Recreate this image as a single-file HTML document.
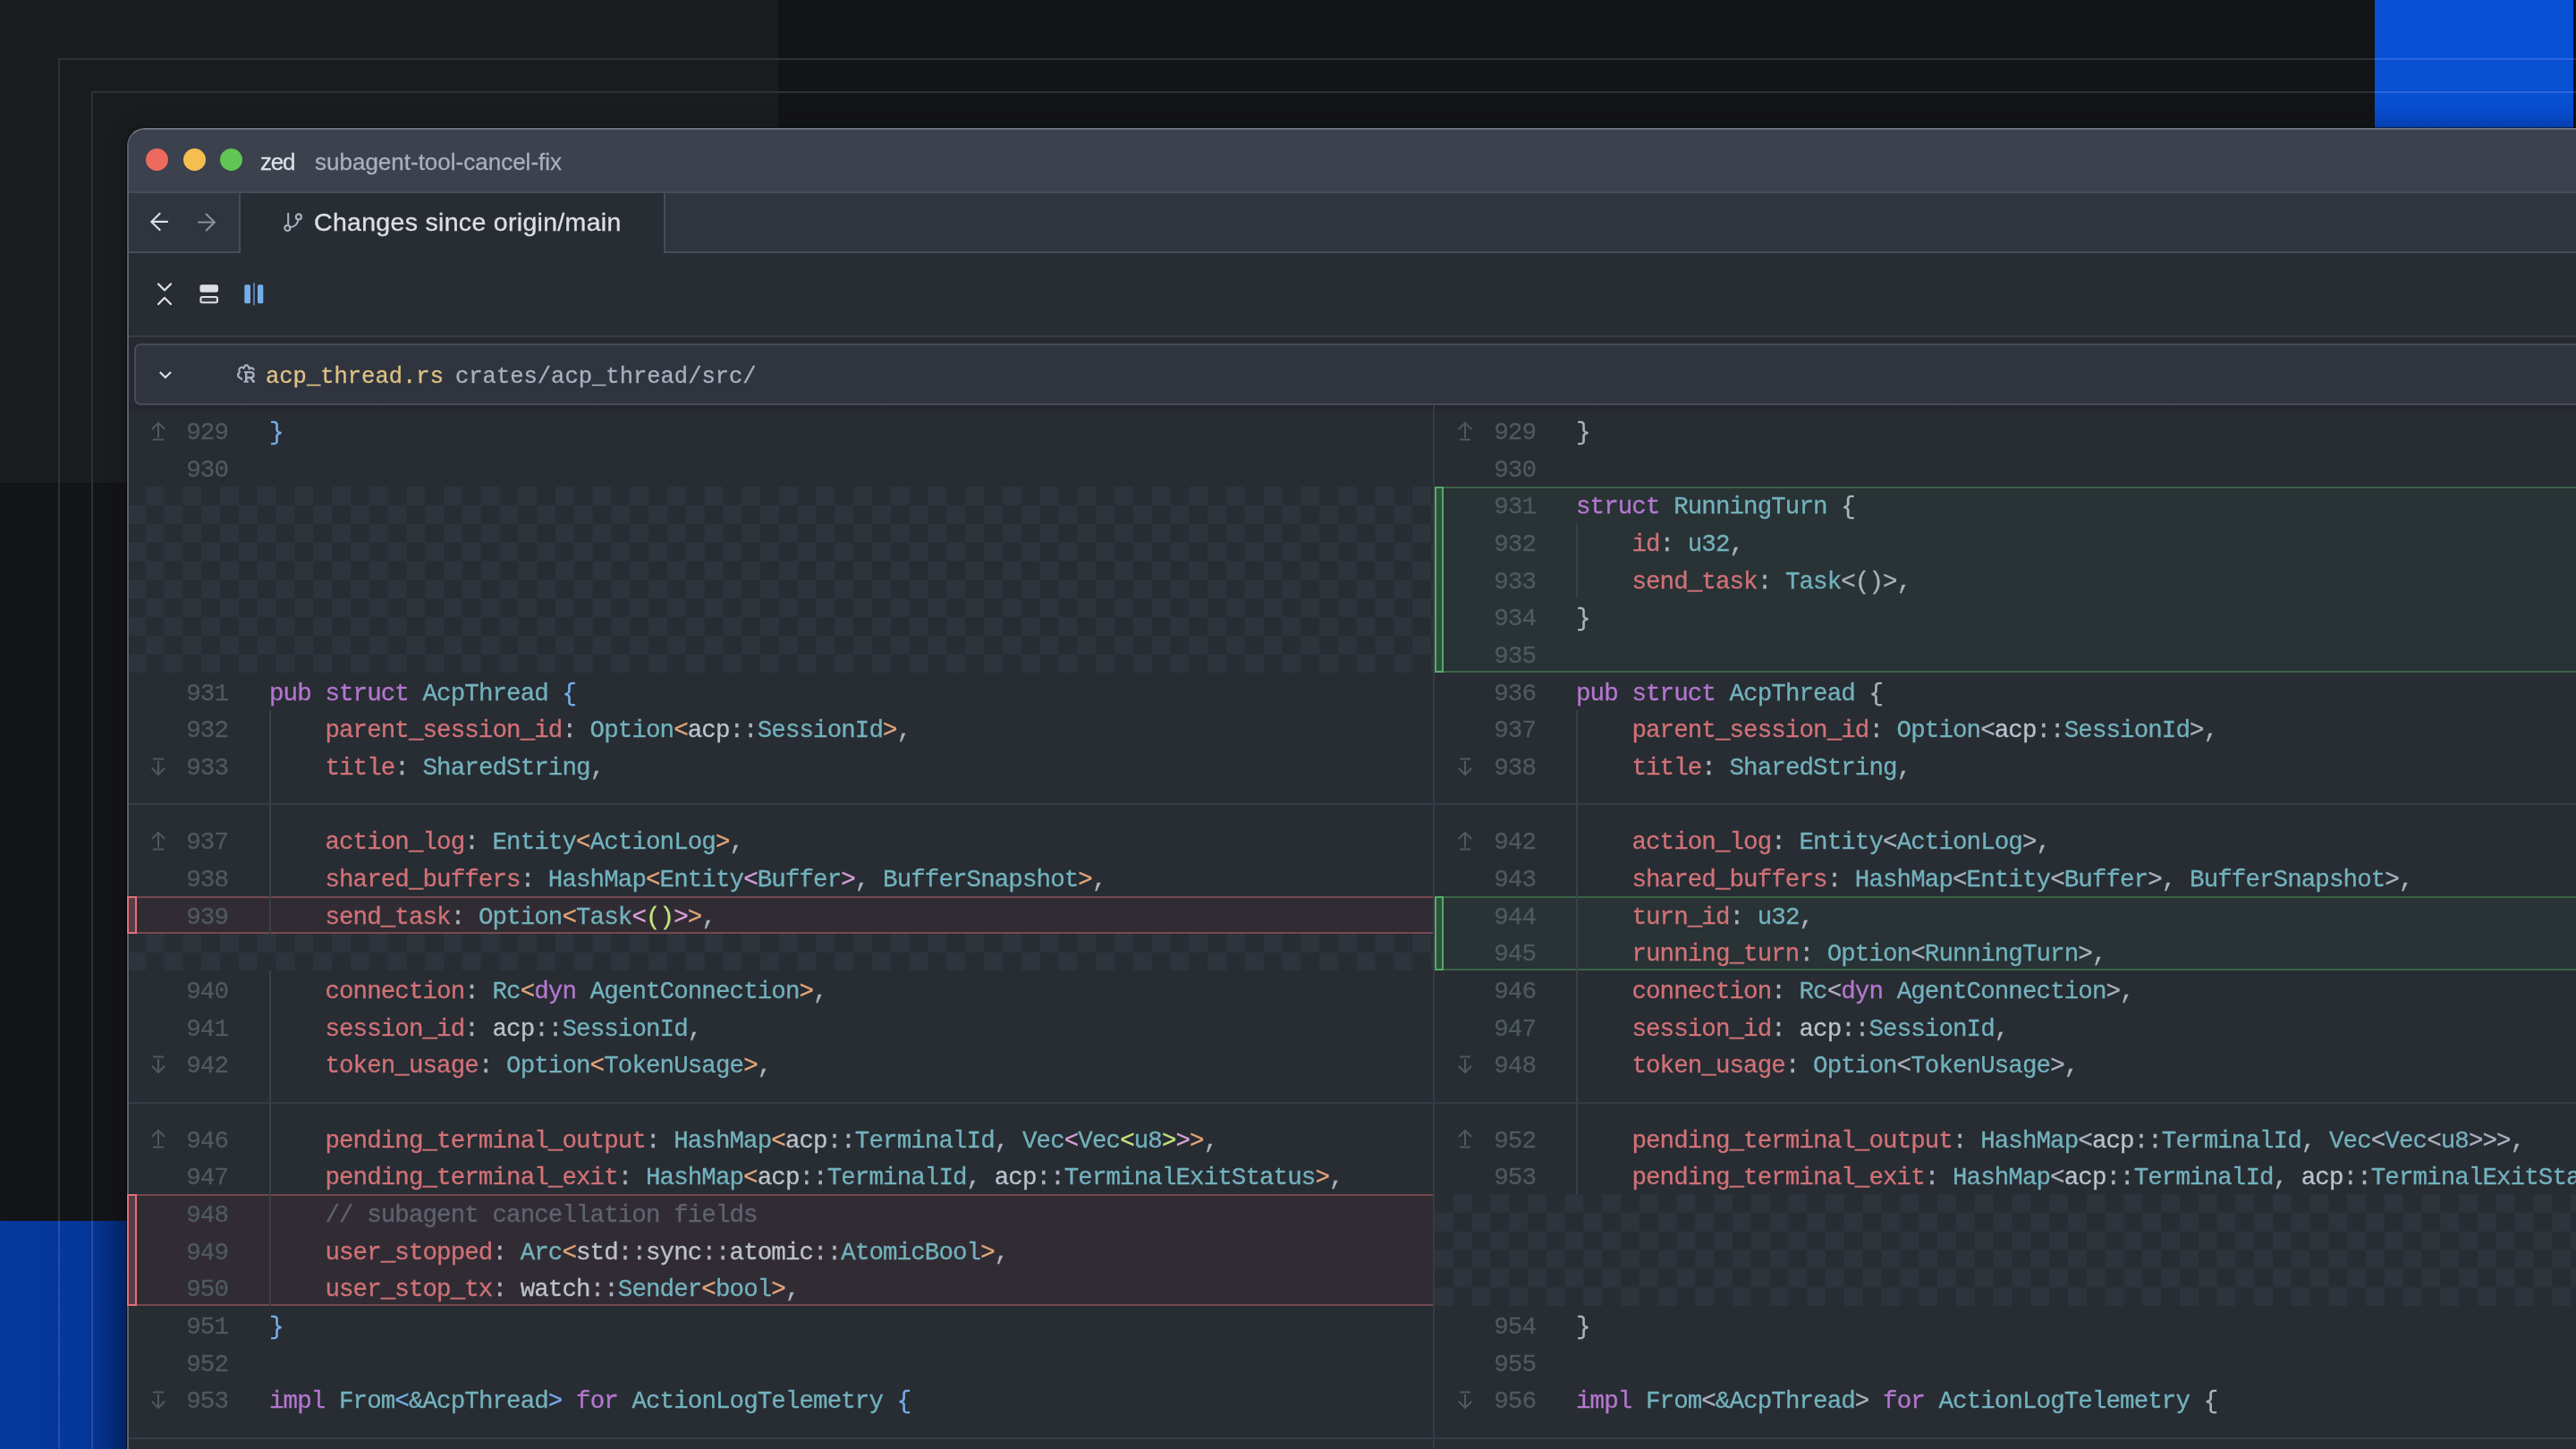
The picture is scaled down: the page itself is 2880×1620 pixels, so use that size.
<!DOCTYPE html>
<html><head><meta charset="utf-8"><style>
*{margin:0;padding:0;box-sizing:border-box}
html,body{width:2880px;height:1620px;overflow:hidden;background:#131418}
.ln,.code,.sans,.mono{will-change:transform}
.code,.ln{-webkit-text-stroke:0.3px currentColor}
.sans,.mono{-webkit-text-stroke:0.3px currentColor}
body{position:relative}
.a{position:absolute}
.ln{position:absolute;width:100px;text-align:right;font-family:"Liberation Mono",monospace;font-size:27.5px;letter-spacing:-0.912px;line-height:41.67px;color:#4e5a5f;white-space:pre}
.code{position:absolute;font-family:"Liberation Mono",monospace;font-size:27.5px;line-height:41.67px;white-space:pre;letter-spacing:-0.912px}
.ic{position:absolute}
.kw{color:#b477cf} .ty{color:#72b2bd} .pr{color:#d07277} .pu{color:#abb2bd} .va{color:#bcc1ca} .cm{color:#5d636f}
.b1{color:#74ade8} .b2{color:#e3a679} .b3{color:#d99fd9} .b4{color:#c3e57a} .pl{color:#bcc1ca}
.sans{font-family:"Liberation Sans",sans-serif;white-space:pre;position:absolute}
.mono{font-family:"Liberation Mono",monospace;white-space:pre;position:absolute}
</style></head>
<body>
<div class="a" style="left:0;top:0;width:870px;height:540px;background:#1b1c20"></div><div class="a" style="left:65px;top:65px;width:2815px;height:1555px;border-left:2px solid #2e3035;border-top:2px solid #2e3035"></div><div class="a" style="left:102px;top:102px;width:2778px;height:1518px;border-left:2px solid #2e3035;border-top:2px solid #2e3035"></div><div class="a" style="left:2655px;top:0;width:222px;height:143px;background:linear-gradient(180deg,#084fd4 0%,#0850d2 75%,#0748c8 100%)"></div><div class="a" style="left:0;top:1365px;width:142px;height:255px;background:linear-gradient(90deg,#06399b 0%,#05379a 65%,#03276e 100%)"></div><div class="a" style="left:2655px;top:65px;width:222px;height:2px;background:#2a64de"></div><div class="a" style="left:2655px;top:102px;width:222px;height:2px;background:#2a64de"></div><div class="a" style="left:65px;top:1365px;width:2px;height:255px;background:#2a4ca8"></div><div class="a" style="left:102px;top:1365px;width:2px;height:255px;background:#2a4ca8"></div><div class="a" style="left:141px;top:142px;width:2758px;height:1497px;border-radius:21px 0 0 0;background:#000;opacity:.6;box-shadow:0 0 22px 2px rgba(0,0,0,.35)"></div><div class="a" style="left:142px;top:143px;width:2758px;height:1497px;border-radius:20px 0 0 0;background:#282c33;border-left:2px solid #5b5f68;border-top:2px solid #6e727c;overflow:hidden"></div><div class="a" style="left:144px;top:145px;width:2736px;height:69px;background:#3b414d;border-top-left-radius:18px"></div><div class="a" style="left:144px;top:214px;width:2736px;height:2px;background:#464b57"></div><div class="a" style="left:162.9px;top:166.3px;width:25.2px;height:25.2px;border-radius:50%;background:#ec6a5e"></div><div class="a" style="left:204.7px;top:166.3px;width:25.2px;height:25.2px;border-radius:50%;background:#f4bf4f"></div><div class="a" style="left:246.2px;top:166.3px;width:25.2px;height:25.2px;border-radius:50%;background:#61c554"></div><div class="sans" id="t_zed" style="left:291px;top:164.5px;font-size:26px;line-height:32px;color:#dce0e5;letter-spacing:-1.2px">zed</div><div class="sans" id="t_branch" style="left:352px;top:164.5px;font-size:26px;line-height:32px;color:#a9afbc">subagent-tool-cancel-fix</div><div class="a" style="left:144px;top:216px;width:2736px;height:66px;background:#2f343e"></div><div class="a" style="left:144px;top:280.5px;width:2736px;height:2px;background:#464b57"></div><div class="a" style="left:267px;top:216px;width:2px;height:66px;background:#464b57"></div><div class="a" style="left:269px;top:216px;width:473px;height:67px;background:#282c33"></div><div class="a" style="left:742px;top:216px;width:2px;height:66px;background:#464b57"></div><svg class="a" style="left:164px;top:236px" width="26" height="24" viewBox="0 0 26 24"><path d="M23 11.9 H6.5 M14.6 2.7 L5.4 11.9 L14.6 21.1" stroke="#dce0e5" stroke-width="2.1" fill="none" stroke-linecap="round"/></svg><svg class="a" style="left:219px;top:236px" width="26" height="24" viewBox="0 0 26 24"><path d="M3 12.5 H19.5 M11.7 3.4 L20.8 12.5 L11.7 21.6" stroke="#8b909a" stroke-width="2.1" fill="none" stroke-linecap="round"/></svg><svg class="a" style="left:315px;top:236px" width="24" height="26" viewBox="0 0 24 26"><circle cx="6.3" cy="19" r="3" stroke="#a9afbc" stroke-width="2.1" fill="none"/><circle cx="18.9" cy="6.4" r="3" stroke="#a9afbc" stroke-width="2.1" fill="none"/><path d="M7.2 2.8 V16.2 M18.4 9.5 C18 14.6 13.8 17.6 8.9 18.3" stroke="#a9afbc" stroke-width="2.1" fill="none" stroke-linecap="round"/></svg><div class="sans" id="t_tab" style="left:351px;top:231px;font-size:28.5px;line-height:34px;color:#dce0e5;letter-spacing:0.31px">Changes since origin/main</div><div class="a" style="left:144px;top:282.5px;width:2736px;height:93px;background:#282c33"></div><div class="a" style="left:144px;top:375px;width:2736px;height:2px;background:#363c46"></div><svg class="a" style="left:172px;top:312px" width="24" height="34" viewBox="0 0 24 34"><path d="M5 5.5 L12 12.5 L19 5.5 M5 28 L12 21 L19 28" stroke="#dce0e5" stroke-width="2.3" fill="none" stroke-linecap="round" stroke-linejoin="round"/></svg><svg class="a" style="left:220px;top:314px" width="28" height="30" viewBox="0 0 28 30"><rect x="3.4" y="4.3" width="20.6" height="8.4" rx="2.2" fill="#dce0e5"/><rect x="4.4" y="17.9" width="18.6" height="6.4" rx="1.8" stroke="#dce0e5" stroke-width="2" fill="#3b3f49"/></svg><svg class="a" style="left:270px;top:312px" width="28" height="34" viewBox="0 0 28 34"><rect x="3.3" y="6.3" width="6.7" height="21" rx="1.6" fill="#74ade8"/><rect x="18" y="6.3" width="6.3" height="21" rx="1.6" fill="#74ade8"/><rect x="13.1" y="4.2" width="1.8" height="25.2" fill="#5b86b5"/></svg><div class="a" style="left:144px;top:377px;width:2736px;height:83px;background:#26292f"></div><div class="a" style="left:150px;top:384px;width:2740px;height:69px;background:#2f343e;border:2px solid #464b57;border-radius:7px"></div><svg class="a" style="left:175px;top:409px" width="20" height="20" viewBox="0 0 20 20"><path d="M3.8 7 L9.9 13 L16 7" stroke="#dce0e5" stroke-width="2.2" fill="none"/></svg><svg class="a" style="left:258px;top:400px" width="36" height="34" viewBox="0 0 36 34"><path d="M25.6 13.1 C24.6 11.3 22.6 10.6 20.7 12.2 C20.1 10.4 19.4 8.2 17.6 8.1 C15.9 8.1 15.1 10.1 14.6 11.5 C13 10.4 11 10.4 9.6 12.3 C8.6 13.8 9.9 15.5 9.9 16.4 C8.4 17.4 7.6 19.4 8.7 21.2 C9.6 22.6 11.4 22.6 12.2 23.9" stroke="#a9afbc" stroke-width="2.2" fill="none" stroke-linecap="round"/><path d="M17.2 16.2 V26.4 M15 16.1 H21.6 C24.3 16.1 25.6 17.3 25.6 19.2 C25.6 21.1 24.3 22.3 21.6 22.3 H17.6 M21.8 22.3 L25.6 26.6 M14.6 26.6 H19.8 M23.8 26.6 H27" stroke="#a9afbc" stroke-width="2.4" fill="none"/></svg><div class="mono" id="t_file" style="left:297px;top:405px;font-size:25.5px;line-height:34px;color:#dec184">acp_thread.rs</div><div class="mono" id="t_path" style="left:509px;top:405px;font-size:25.5px;line-height:34px;color:#a9afbc">crates/acp_thread/src/</div><div class="a" style="left:144px;top:453px;width:2736px;height:1167px;background:#282c33"></div><div class="a" style="left:144px;top:453px;width:2736px;height:10px;background:linear-gradient(#22252b,rgba(40,44,51,0))"></div><div class="a" style="left:144.0px;top:543.5px;width:1458.0px;height:208.4px;background:repeating-conic-gradient(#2f333c 0% 25%, #282c33 0% 50%) -2.00px 0px / 41.67px 41.67px"></div><div class="a" style="left:144.0px;top:1043.6px;width:1458.0px;height:41.7px;background:repeating-conic-gradient(#2f333c 0% 25%, #282c33 0% 50%) -2.00px 0px / 41.67px 41.67px"></div><div class="a" style="left:1604.0px;top:1335.3px;width:1276.0px;height:125.0px;background:repeating-conic-gradient(#2f333c 0% 25%, #282c33 0% 50%) -0.30px 0px / 41.67px 41.67px"></div><div class="a" style="left:144px;top:1001.9px;width:1458px;height:41.7px;background:#312c34;border-top:2px solid #754850;border-bottom:2px solid #754850"></div><div class="a" style="left:142px;top:1001.9px;width:11px;height:41.7px;background:#573e46;border:2px solid #e07078"></div><div class="a" style="left:144px;top:1335.3px;width:1458px;height:125.0px;background:#312c34;border-top:2px solid #754850;border-bottom:2px solid #754850"></div><div class="a" style="left:142px;top:1335.3px;width:11px;height:125.0px;background:#573e46;border:2px solid #e07078"></div><div class="a" style="left:1604px;top:543.5px;width:1276px;height:208.4px;background:#293235;border-top:2px solid #3b6347;border-bottom:2px solid #3b6347"></div><div class="a" style="left:1604px;top:543.5px;width:10px;height:208.4px;background:#2f4f3f;border:2px solid #55ab63"></div><div class="a" style="left:1604px;top:1001.9px;width:1276px;height:83.3px;background:#293235;border-top:2px solid #3b6347;border-bottom:2px solid #3b6347"></div><div class="a" style="left:1604px;top:1001.9px;width:10px;height:83.3px;background:#2f4f3f;border:2px solid #55ab63"></div><div class="a" style="left:1602px;top:453px;width:2px;height:1167px;background:#363b45"></div><div class="a" style="left:144px;top:898.1px;width:1458px;height:2px;background:#363c46"></div><div class="a" style="left:1604px;top:898.1px;width:1276px;height:2px;background:#363c46"></div><div class="a" style="left:144px;top:1231.5px;width:1458px;height:2px;background:#363c46"></div><div class="a" style="left:1604px;top:1231.5px;width:1276px;height:2px;background:#363c46"></div><div class="a" style="left:144px;top:1606.5px;width:1458px;height:2px;background:#363c46"></div><div class="a" style="left:1604px;top:1606.5px;width:1276px;height:2px;background:#363c46"></div><div class="a" style="left:300.5px;top:793.6px;width:2px;height:250.0px;background:#3b4048"></div><div class="a" style="left:300.5px;top:1085.2px;width:2px;height:375.0px;background:#3b4048"></div><div class="a" style="left:1761.8px;top:585.2px;width:2px;height:83.3px;background:#3b4048"></div><div class="a" style="left:1761.8px;top:793.6px;width:2px;height:541.7px;background:#3b4048"></div><div class="ln" style="left:155.3px;top:463.05px">929</div><svg class="ic" style="left:166.5px;top:469.5px" width="20" height="24" viewBox="0 0 20 24"><path d="M2.8 10 L10 2.8 L17.2 10 M10 3.2 V19.5 M4 21.6 H16" stroke="#4e5a5f" stroke-width="2" fill="none" stroke-linecap="butt" stroke-linejoin="miter"/></svg><div class="code" style="left:300.5px;top:463.05px"><span class="b1">}</span></div><div class="ln" style="left:155.3px;top:504.72px">930</div><div class="ln" style="left:155.3px;top:754.74px">931</div><div class="code" style="left:300.5px;top:754.74px"><span class="kw">pub</span><span class="pu"> </span><span class="kw">struct</span><span class="pu"> </span><span class="ty">AcpThread</span><span class="pu"> </span><span class="b1">{</span></div><div class="ln" style="left:155.3px;top:796.41px">932</div><div class="code" style="left:300.5px;top:796.41px"><span class="pu">    </span><span class="pr">parent_session_id</span><span class="pu">: </span><span class="ty">Option</span><span class="b2">&lt;</span><span class="va">acp</span><span class="pu">::</span><span class="ty">SessionId</span><span class="b2">&gt;</span><span class="pu">,</span></div><div class="ln" style="left:155.3px;top:838.08px">933</div><svg class="ic" style="left:166.5px;top:844.6px" width="20" height="24" viewBox="0 0 20 24"><path d="M2.8 13.8 L10 21 L17.2 13.8 M10 20.6 V5.8 M4 3.6 H16" stroke="#4e5a5f" stroke-width="2" fill="none" stroke-linecap="butt" stroke-linejoin="miter"/></svg><div class="code" style="left:300.5px;top:838.08px"><span class="pu">    </span><span class="pr">title</span><span class="pu">: </span><span class="ty">SharedString</span><span class="pu">,</span></div><div class="ln" style="left:155.3px;top:921.42px">937</div><svg class="ic" style="left:166.5px;top:927.9px" width="20" height="24" viewBox="0 0 20 24"><path d="M2.8 10 L10 2.8 L17.2 10 M10 3.2 V19.5 M4 21.6 H16" stroke="#4e5a5f" stroke-width="2" fill="none" stroke-linecap="butt" stroke-linejoin="miter"/></svg><div class="code" style="left:300.5px;top:921.42px"><span class="pu">    </span><span class="pr">action_log</span><span class="pu">: </span><span class="ty">Entity</span><span class="b2">&lt;</span><span class="ty">ActionLog</span><span class="b2">&gt;</span><span class="pu">,</span></div><div class="ln" style="left:155.3px;top:963.09px">938</div><div class="code" style="left:300.5px;top:963.09px"><span class="pu">    </span><span class="pr">shared_buffers</span><span class="pu">: </span><span class="ty">HashMap</span><span class="b2">&lt;</span><span class="ty">Entity</span><span class="b3">&lt;</span><span class="ty">Buffer</span><span class="b3">&gt;</span><span class="pu">, </span><span class="ty">BufferSnapshot</span><span class="b2">&gt;</span><span class="pu">,</span></div><div class="ln" style="left:155.3px;top:1004.76px">939</div><div class="code" style="left:300.5px;top:1004.76px"><span class="pu">    </span><span class="pr">send_task</span><span class="pu">: </span><span class="ty">Option</span><span class="b2">&lt;</span><span class="ty">Task</span><span class="b3">&lt;</span><span class="b4">(</span><span class="b4">)</span><span class="b3">&gt;</span><span class="b2">&gt;</span><span class="pu">,</span></div><div class="ln" style="left:155.3px;top:1088.10px">940</div><div class="code" style="left:300.5px;top:1088.10px"><span class="pu">    </span><span class="pr">connection</span><span class="pu">: </span><span class="ty">Rc</span><span class="b2">&lt;</span><span class="kw">dyn</span><span class="pu"> </span><span class="ty">AgentConnection</span><span class="b2">&gt;</span><span class="pu">,</span></div><div class="ln" style="left:155.3px;top:1129.77px">941</div><div class="code" style="left:300.5px;top:1129.77px"><span class="pu">    </span><span class="pr">session_id</span><span class="pu">: </span><span class="va">acp</span><span class="pu">::</span><span class="ty">SessionId</span><span class="pu">,</span></div><div class="ln" style="left:155.3px;top:1171.44px">942</div><svg class="ic" style="left:166.5px;top:1177.9px" width="20" height="24" viewBox="0 0 20 24"><path d="M2.8 13.8 L10 21 L17.2 13.8 M10 20.6 V5.8 M4 3.6 H16" stroke="#4e5a5f" stroke-width="2" fill="none" stroke-linecap="butt" stroke-linejoin="miter"/></svg><div class="code" style="left:300.5px;top:1171.44px"><span class="pu">    </span><span class="pr">token_usage</span><span class="pu">: </span><span class="ty">Option</span><span class="b2">&lt;</span><span class="ty">TokenUsage</span><span class="b2">&gt;</span><span class="pu">,</span></div><div class="ln" style="left:155.3px;top:1254.78px">946</div><svg class="ic" style="left:166.5px;top:1261.3px" width="20" height="24" viewBox="0 0 20 24"><path d="M2.8 10 L10 2.8 L17.2 10 M10 3.2 V19.5 M4 21.6 H16" stroke="#4e5a5f" stroke-width="2" fill="none" stroke-linecap="butt" stroke-linejoin="miter"/></svg><div class="code" style="left:300.5px;top:1254.78px"><span class="pu">    </span><span class="pr">pending_terminal_output</span><span class="pu">: </span><span class="ty">HashMap</span><span class="b2">&lt;</span><span class="va">acp</span><span class="pu">::</span><span class="ty">TerminalId</span><span class="pu">, </span><span class="ty">Vec</span><span class="b3">&lt;</span><span class="ty">Vec</span><span class="b4">&lt;</span><span class="ty">u8</span><span class="b4">&gt;</span><span class="b3">&gt;</span><span class="b2">&gt;</span><span class="pu">,</span></div><div class="ln" style="left:155.3px;top:1296.45px">947</div><div class="code" style="left:300.5px;top:1296.45px"><span class="pu">    </span><span class="pr">pending_terminal_exit</span><span class="pu">: </span><span class="ty">HashMap</span><span class="b2">&lt;</span><span class="va">acp</span><span class="pu">::</span><span class="ty">TerminalId</span><span class="pu">, </span><span class="va">acp</span><span class="pu">::</span><span class="ty">TerminalExitStatus</span><span class="b2">&gt;</span><span class="pu">,</span></div><div class="ln" style="left:155.3px;top:1338.12px">948</div><div class="code" style="left:300.5px;top:1338.12px"><span class="pu">    </span><span class="cm">// subagent cancellation fields</span></div><div class="ln" style="left:155.3px;top:1379.79px">949</div><div class="code" style="left:300.5px;top:1379.79px"><span class="pu">    </span><span class="pr">user_stopped</span><span class="pu">: </span><span class="ty">Arc</span><span class="b2">&lt;</span><span class="va">std</span><span class="pu">::</span><span class="va">sync</span><span class="pu">::</span><span class="va">atomic</span><span class="pu">::</span><span class="ty">AtomicBool</span><span class="b2">&gt;</span><span class="pu">,</span></div><div class="ln" style="left:155.3px;top:1421.46px">950</div><div class="code" style="left:300.5px;top:1421.46px"><span class="pu">    </span><span class="pr">user_stop_tx</span><span class="pu">: </span><span class="va">watch</span><span class="pu">::</span><span class="ty">Sender</span><span class="b2">&lt;</span><span class="ty">bool</span><span class="b2">&gt;</span><span class="pu">,</span></div><div class="ln" style="left:155.3px;top:1463.13px">951</div><div class="code" style="left:300.5px;top:1463.13px"><span class="b1">}</span></div><div class="ln" style="left:155.3px;top:1504.80px">952</div><div class="ln" style="left:155.3px;top:1546.47px">953</div><svg class="ic" style="left:166.5px;top:1553.0px" width="20" height="24" viewBox="0 0 20 24"><path d="M2.8 13.8 L10 21 L17.2 13.8 M10 20.6 V5.8 M4 3.6 H16" stroke="#4e5a5f" stroke-width="2" fill="none" stroke-linecap="butt" stroke-linejoin="miter"/></svg><div class="code" style="left:300.5px;top:1546.47px"><span class="kw">impl</span><span class="pu"> </span><span class="ty">From</span><span class="b1">&lt;</span><span class="ty">&amp;</span><span class="ty">AcpThread</span><span class="b1">&gt;</span><span class="pu"> </span><span class="kw">for</span><span class="pu"> </span><span class="ty">ActionLogTelemetry</span><span class="pu"> </span><span class="b1">{</span></div><div class="ln" style="left:1616.6px;top:463.05px">929</div><svg class="ic" style="left:1627.8px;top:469.5px" width="20" height="24" viewBox="0 0 20 24"><path d="M2.8 10 L10 2.8 L17.2 10 M10 3.2 V19.5 M4 21.6 H16" stroke="#4e5a5f" stroke-width="2" fill="none" stroke-linecap="butt" stroke-linejoin="miter"/></svg><div class="code" style="left:1761.8px;top:463.05px"><span class="pu">}</span></div><div class="ln" style="left:1616.6px;top:504.72px">930</div><div class="ln" style="left:1616.6px;top:546.39px">931</div><div class="code" style="left:1761.8px;top:546.39px"><span class="kw">struct</span><span class="pu"> </span><span class="ty">RunningTurn</span><span class="pu"> {</span></div><div class="ln" style="left:1616.6px;top:588.06px">932</div><div class="code" style="left:1761.8px;top:588.06px"><span class="pu">    </span><span class="pr">id</span><span class="pu">: </span><span class="ty">u32</span><span class="pu">,</span></div><div class="ln" style="left:1616.6px;top:629.73px">933</div><div class="code" style="left:1761.8px;top:629.73px"><span class="pu">    </span><span class="pr">send_task</span><span class="pu">: </span><span class="ty">Task</span><span class="pu">&lt;()&gt;,</span></div><div class="ln" style="left:1616.6px;top:671.40px">934</div><div class="code" style="left:1761.8px;top:671.40px"><span class="pu">}</span></div><div class="ln" style="left:1616.6px;top:713.07px">935</div><div class="ln" style="left:1616.6px;top:754.74px">936</div><div class="code" style="left:1761.8px;top:754.74px"><span class="kw">pub</span><span class="pu"> </span><span class="kw">struct</span><span class="pu"> </span><span class="ty">AcpThread</span><span class="pu"> {</span></div><div class="ln" style="left:1616.6px;top:796.41px">937</div><div class="code" style="left:1761.8px;top:796.41px"><span class="pu">    </span><span class="pr">parent_session_id</span><span class="pu">: </span><span class="ty">Option</span><span class="pu">&lt;</span><span class="va">acp</span><span class="pu">::</span><span class="ty">SessionId</span><span class="pu">&gt;,</span></div><div class="ln" style="left:1616.6px;top:838.08px">938</div><svg class="ic" style="left:1627.8px;top:844.6px" width="20" height="24" viewBox="0 0 20 24"><path d="M2.8 13.8 L10 21 L17.2 13.8 M10 20.6 V5.8 M4 3.6 H16" stroke="#4e5a5f" stroke-width="2" fill="none" stroke-linecap="butt" stroke-linejoin="miter"/></svg><div class="code" style="left:1761.8px;top:838.08px"><span class="pu">    </span><span class="pr">title</span><span class="pu">: </span><span class="ty">SharedString</span><span class="pu">,</span></div><div class="ln" style="left:1616.6px;top:921.42px">942</div><svg class="ic" style="left:1627.8px;top:927.9px" width="20" height="24" viewBox="0 0 20 24"><path d="M2.8 10 L10 2.8 L17.2 10 M10 3.2 V19.5 M4 21.6 H16" stroke="#4e5a5f" stroke-width="2" fill="none" stroke-linecap="butt" stroke-linejoin="miter"/></svg><div class="code" style="left:1761.8px;top:921.42px"><span class="pu">    </span><span class="pr">action_log</span><span class="pu">: </span><span class="ty">Entity</span><span class="pu">&lt;</span><span class="ty">ActionLog</span><span class="pu">&gt;,</span></div><div class="ln" style="left:1616.6px;top:963.09px">943</div><div class="code" style="left:1761.8px;top:963.09px"><span class="pu">    </span><span class="pr">shared_buffers</span><span class="pu">: </span><span class="ty">HashMap</span><span class="pu">&lt;</span><span class="ty">Entity</span><span class="pu">&lt;</span><span class="ty">Buffer</span><span class="pu">&gt;, </span><span class="ty">BufferSnapshot</span><span class="pu">&gt;,</span></div><div class="ln" style="left:1616.6px;top:1004.76px">944</div><div class="code" style="left:1761.8px;top:1004.76px"><span class="pu">    </span><span class="pr">turn_id</span><span class="pu">: </span><span class="ty">u32</span><span class="pu">,</span></div><div class="ln" style="left:1616.6px;top:1046.43px">945</div><div class="code" style="left:1761.8px;top:1046.43px"><span class="pu">    </span><span class="pr">running_turn</span><span class="pu">: </span><span class="ty">Option</span><span class="pu">&lt;</span><span class="ty">RunningTurn</span><span class="pu">&gt;,</span></div><div class="ln" style="left:1616.6px;top:1088.10px">946</div><div class="code" style="left:1761.8px;top:1088.10px"><span class="pu">    </span><span class="pr">connection</span><span class="pu">: </span><span class="ty">Rc</span><span class="pu">&lt;</span><span class="kw">dyn</span><span class="pu"> </span><span class="ty">AgentConnection</span><span class="pu">&gt;,</span></div><div class="ln" style="left:1616.6px;top:1129.77px">947</div><div class="code" style="left:1761.8px;top:1129.77px"><span class="pu">    </span><span class="pr">session_id</span><span class="pu">: </span><span class="va">acp</span><span class="pu">::</span><span class="ty">SessionId</span><span class="pu">,</span></div><div class="ln" style="left:1616.6px;top:1171.44px">948</div><svg class="ic" style="left:1627.8px;top:1177.9px" width="20" height="24" viewBox="0 0 20 24"><path d="M2.8 13.8 L10 21 L17.2 13.8 M10 20.6 V5.8 M4 3.6 H16" stroke="#4e5a5f" stroke-width="2" fill="none" stroke-linecap="butt" stroke-linejoin="miter"/></svg><div class="code" style="left:1761.8px;top:1171.44px"><span class="pu">    </span><span class="pr">token_usage</span><span class="pu">: </span><span class="ty">Option</span><span class="pu">&lt;</span><span class="ty">TokenUsage</span><span class="pu">&gt;,</span></div><div class="ln" style="left:1616.6px;top:1254.78px">952</div><svg class="ic" style="left:1627.8px;top:1261.3px" width="20" height="24" viewBox="0 0 20 24"><path d="M2.8 10 L10 2.8 L17.2 10 M10 3.2 V19.5 M4 21.6 H16" stroke="#4e5a5f" stroke-width="2" fill="none" stroke-linecap="butt" stroke-linejoin="miter"/></svg><div class="code" style="left:1761.8px;top:1254.78px"><span class="pu">    </span><span class="pr">pending_terminal_output</span><span class="pu">: </span><span class="ty">HashMap</span><span class="pu">&lt;</span><span class="va">acp</span><span class="pu">::</span><span class="ty">TerminalId</span><span class="pu">, </span><span class="ty">Vec</span><span class="pu">&lt;</span><span class="ty">Vec</span><span class="pu">&lt;</span><span class="ty">u8</span><span class="pu">&gt;&gt;&gt;,</span></div><div class="ln" style="left:1616.6px;top:1296.45px">953</div><div class="code" style="left:1761.8px;top:1296.45px"><span class="pu">    </span><span class="pr">pending_terminal_exit</span><span class="pu">: </span><span class="ty">HashMap</span><span class="pu">&lt;</span><span class="va">acp</span><span class="pu">::</span><span class="ty">TerminalId</span><span class="pu">, </span><span class="va">acp</span><span class="pu">::</span><span class="ty">TerminalExitStatus</span><span class="pu">&gt;,</span></div><div class="ln" style="left:1616.6px;top:1463.13px">954</div><div class="code" style="left:1761.8px;top:1463.13px"><span class="pu">}</span></div><div class="ln" style="left:1616.6px;top:1504.80px">955</div><div class="ln" style="left:1616.6px;top:1546.47px">956</div><svg class="ic" style="left:1627.8px;top:1553.0px" width="20" height="24" viewBox="0 0 20 24"><path d="M2.8 13.8 L10 21 L17.2 13.8 M10 20.6 V5.8 M4 3.6 H16" stroke="#4e5a5f" stroke-width="2" fill="none" stroke-linecap="butt" stroke-linejoin="miter"/></svg><div class="code" style="left:1761.8px;top:1546.47px"><span class="kw">impl</span><span class="pu"> </span><span class="ty">From</span><span class="pu">&lt;</span><span class="ty">&amp;</span><span class="ty">AcpThread</span><span class="pu">&gt; </span><span class="kw">for</span><span class="pu"> </span><span class="ty">ActionLogTelemetry</span><span class="pu"> {</span></div>
</body></html>
